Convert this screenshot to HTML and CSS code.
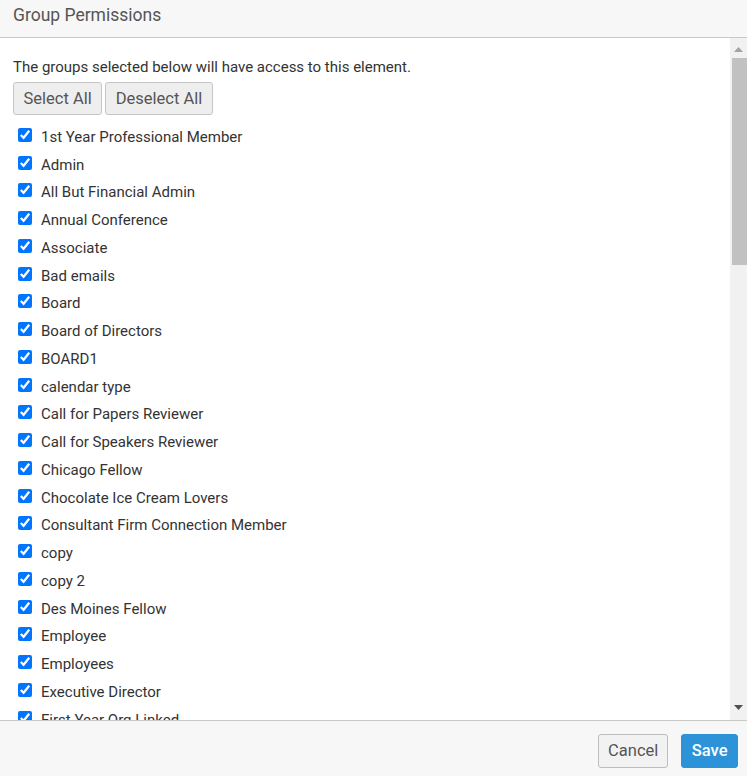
FILE: index.html
```html
<!DOCTYPE html>
<html>
<head>
<meta charset="utf-8">
<link rel="stylesheet" href="styles.css">
</head>
<body>
<div class="modal">
  <div class="modal-header">Group Permissions</div>
  <div class="modal-main">
  <div class="modal-body">
    <p class="intro">The groups selected below will have access to this element.</p>
    <div class="actions">
      <button class="btn">Select All</button>
      <button class="btn">Deselect All</button>
    </div>
    <ul class="groups">
      <li><label><input type="checkbox" checked><span>1st Year Professional Member</span></label></li>
      <li><label><input type="checkbox" checked><span>Admin</span></label></li>
      <li><label><input type="checkbox" checked><span>All But Financial Admin</span></label></li>
      <li><label><input type="checkbox" checked><span>Annual Conference</span></label></li>
      <li><label><input type="checkbox" checked><span>Associate</span></label></li>
      <li><label><input type="checkbox" checked><span>Bad emails</span></label></li>
      <li><label><input type="checkbox" checked><span>Board</span></label></li>
      <li><label><input type="checkbox" checked><span>Board of Directors</span></label></li>
      <li><label><input type="checkbox" checked><span>BOARD1</span></label></li>
      <li><label><input type="checkbox" checked><span>calendar type</span></label></li>
      <li><label><input type="checkbox" checked><span>Call for Papers Reviewer</span></label></li>
      <li><label><input type="checkbox" checked><span>Call for Speakers Reviewer</span></label></li>
      <li><label><input type="checkbox" checked><span>Chicago Fellow</span></label></li>
      <li><label><input type="checkbox" checked><span>Chocolate Ice Cream Lovers</span></label></li>
      <li><label><input type="checkbox" checked><span>Consultant Firm Connection Member</span></label></li>
      <li><label><input type="checkbox" checked><span>copy</span></label></li>
      <li><label><input type="checkbox" checked><span>copy 2</span></label></li>
      <li><label><input type="checkbox" checked><span>Des Moines Fellow</span></label></li>
      <li><label><input type="checkbox" checked><span>Employee</span></label></li>
      <li><label><input type="checkbox" checked><span>Employees</span></label></li>
      <li><label><input type="checkbox" checked><span>Executive Director</span></label></li>
      <li><label><input type="checkbox" checked><span>First Year Org Linked</span></label></li>
      <li><label><input type="checkbox" checked><span>Fellow</span></label></li>
      <li><label><input type="checkbox" checked><span>Finance Committee</span></label></li>
      <li><label><input type="checkbox" checked><span>Golf Outing</span></label></li>
      <li><label><input type="checkbox" checked><span>Government Affairs</span></label></li>
      <li><label><input type="checkbox" checked><span>Honorary Member</span></label></li>
      <li><label><input type="checkbox" checked><span>Individual Member</span></label></li>
      <li><label><input type="checkbox" checked><span>Lapsed Members</span></label></li>
      <li><label><input type="checkbox" checked><span>Leadership Council</span></label></li>
    </ul>
  </div>
  <div class="scrollbar" aria-hidden="true">
    <div class="sb-btn sb-up">
      <svg width="9" height="5" viewBox="0 0 9 5"><polygon points="0,5 4.5,0 9,5" fill="#a3a3a3"/></svg>
    </div>
    <div class="sb-track"><div class="sb-thumb"></div></div>
    <div class="sb-btn sb-down">
      <svg width="9" height="5" viewBox="0 0 9 5"><polygon points="0,0 9,0 4.5,5" fill="#505050"/></svg>
    </div>
  </div>
  </div>
  <div class="modal-footer">
    <button class="btn btn-cancel">Cancel</button>
    <button class="btn btn-save">Save</button>
  </div>
</div>
</body>
</html>
```

FILE: styles.css
```css
html, body {
  margin: 0;
  padding: 0;
  height: 100%;
}
body {
  font-family: Roboto, "Liberation Sans", Arial, sans-serif;
  color: #333;
  background: #fff;
}
.modal {
  display: flex;
  flex-direction: column;
  height: 776px;
}
.modal-header {
  flex: 0 0 auto;
  height: 38px;
  box-sizing: border-box;
  padding: 5px 13px 0;
  font-size: 17.5px;
  line-height: 20px;
  color: #555;
  background: #f7f7f7;
  border-bottom: 1px solid #c8c8c8;
}
.modal-main {
  flex: 1 1 auto;
  min-height: 0;
  display: flex;
}
.modal-body {
  flex: 1 1 auto;
  min-width: 0;
  overflow: hidden;
  padding: 18px 0 0 13px;
}
.scrollbar {
  flex: 0 0 17px;
  display: flex;
  flex-direction: column;
  background: #f1f1f1;
}
.sb-btn {
  flex: 0 0 20px;
  display: flex;
  justify-content: center;
}
.sb-btn svg {
  display: block;
}
.sb-up {
  align-items: flex-start;
  padding-top: 9px;
  box-sizing: border-box;
}
.sb-down {
  align-items: flex-start;
  padding-top: 5px;
  box-sizing: border-box;
}
.sb-track {
  flex: 1 1 auto;
  display: flex;
  flex-direction: column;
}
.sb-thumb {
  height: 207px;
  margin-left: 2px;
  background: #c1c1c1;
}
.intro {
  margin: 0;
  font-size: 15px;
  line-height: 22px;
  color: #333;
}
.actions {
  display: flex;
  gap: 3px;
  margin-top: 4px;
}
.btn {
  font-family: Roboto, "Liberation Sans", Arial, sans-serif;
  font-size: 16.5px;
  color: #555;
  background: #eeeeee;
  border: 1px solid #c6c6c6;
  border-radius: 3px;
  height: 33px;
  padding: 0 9.5px;
  cursor: pointer;
}
.groups {
  list-style: none;
  margin: 8px 0 0;
  padding: 0;
}
.groups li {
  height: 27.75px;
}
.groups label {
  display: flex;
  align-items: center;
  height: 100%;
  font-size: 15px;
  color: #333;
}
.groups input {
  width: 14px;
  height: 14px;
  margin: -4px 9px 0 5px;
  accent-color: #0075ff;
}
.modal-footer {
  flex: 0 0 56px;
  box-sizing: border-box;
  display: flex;
  justify-content: flex-end;
  align-items: center;
  gap: 13px;
  padding: 4px 9px 0;
  background: #f7f7f7;
  border-top: 1px solid #c8c8c8;
}
.btn-cancel {
  height: 34px;
  padding: 0 9px;
  background: #f2f2f2;
  border-color: #bdbdbd;
}
.btn-save {
  height: 34px;
  padding: 0 9.5px;
  color: #fff;
  font-weight: 500;
  background: #2c93d8;
  border-color: #2c93d8;
}
```
